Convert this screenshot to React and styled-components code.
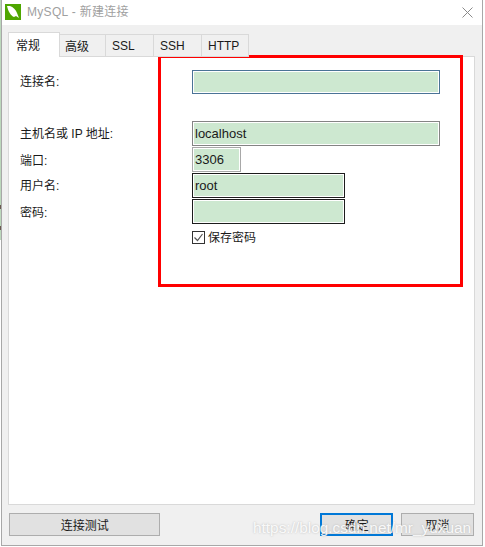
import React from 'react';
import styled, { createGlobalStyle } from 'styled-components';

const Global = createGlobalStyle`
  html, body { margin: 0; padding: 0; background: #fff; }
  body { font-family: "Liberation Sans", "Noto Sans CJK SC", sans-serif; font-size: 12px; color: #1a1a1a; }
`;

const Page = styled.div`
  position: relative;
  width: 485px;
  height: 547px;
  overflow: hidden;
  background: #fff;
`;

const Win = styled.div`
  box-sizing: border-box;
  width: 482px;
  height: 546px;
  margin-left: 1px;
  border-left: 1px solid #a8a8a8;
  border-right: 1px solid #a8a8a8;
  border-bottom: 1px solid #a8a8a8;
  display: flex;
  flex-direction: column;
`;

const TitleBar = styled.div`
  box-sizing: border-box;
  height: 25px;
  flex: none;
  display: flex;
  align-items: center;
  padding: 0 9px 1px 3px;
  background: #fff;
`;

const AppIcon = styled.svg`
  width: 16px;
  height: 16px;
  flex: none;
`;

const Title = styled.span`
  margin-left: 6px;
  font-size: 12px;
  letter-spacing: 0.3px;
  line-height: 14px;
  margin-top: -1px;
  color: #a0a0a0;
  flex: 1;
`;

const Body = styled.div`
  flex: 1;
  background: #f0f0f0;
  padding: 8px 7px 9px 6px;
  display: flex;
  flex-direction: column;
`;

const Tabs = styled.div`
  display: flex;
  height: 24px;
  align-items: flex-end;
  position: relative;
  z-index: 1;
  margin-bottom: -1px;
`;

const Tab = styled.div`
  box-sizing: border-box;
  width: ${p => p.$w}px;
  height: ${p => (p.$active ? 25 : 23)}px;
  margin-left: ${p => (p.$first ? 0 : -1)}px;
  padding: 0 0 ${p => (p.$active ? 2 : 0)}px ${p => p.$pad}px;
  display: flex;
  align-items: center;
  border: 1px solid #d9d9d9;
  border-bottom: ${p => (p.$active ? 'none' : '1px solid #d9d9d9')};
  background: ${p => (p.$active ? '#fff' : '#f0f0f0')};
  position: relative;
  z-index: ${p => (p.$active ? 2 : 1)};
  font-size: 12px;
`;

const Panel = styled.div`
  flex: 1;
  box-sizing: border-box;
  background: #fff;
  border: 1px solid #d9d9d9;
  padding: 12px 0 0 183px;
  position: relative;
`;

const Row = styled.div`
  position: relative;
  display: flex;
  margin-top: ${p => p.$gap || 1}px;
  height: ${p => p.$h || 25}px;
`;

const Label = styled.label`
  position: absolute;
  left: -172px;
  top: calc(50% - ${p => p.$up || 2}px);
  transform: translateY(-50%);
  white-space: nowrap;
  font-size: 12px;
`;

const Field = styled.div`
  box-sizing: border-box;
  width: ${p => p.$w}px;
  height: 100%;
  background: #cde8d0;
  border: 1px solid ${p => p.$border};
  box-shadow: inset 0 0 0 1px #fff;
  padding: 0 2px 1px;
  display: flex;
  align-items: center;
  font-size: 13px;
`;

const CheckRow = styled.div`
  display: flex;
  align-items: center;
  gap: 3px;
  margin-top: 5px;
  font-size: 12px;
  line-height: 14px;
`;

const CheckBox = styled.span`
  box-sizing: border-box;
  width: 13px;
  height: 13px;
  border: 1px solid #333;
  background: #fff;
  display: flex;
`;

const CheckText = styled.span`
  margin-top: 2px;
`;

const Footer = styled.div`
  height: 23px;
  margin-top: 8px;
  display: flex;
  padding-left: 1px;
  padding-right: 1px;
`;

const Btn = styled.div`
  box-sizing: border-box;
  width: ${p => p.$w}px;
  margin-left: ${p => p.$ml || 0}px;
  background: #e1e1e1;
  border: ${p => (p.$focus ? '2px solid #0078d7' : '1px solid #adadad')};
  display: flex;
  align-items: center;
  justify-content: center;
  font-size: 12px;
`;

const Watermark = styled.div`
  position: absolute;
  left: 253px;
  top: 518px;
  font-size: 15.4px;
  line-height: 20px;
  color: rgba(255, 255, 255, 0.9);
  text-shadow: 0 0 2px rgba(170, 170, 170, 0.8);
  white-space: nowrap;
`;

const RedBox = styled.div`
  position: absolute;
  left: 158px;
  top: 55px;
  width: 305px;
  height: 232px;
  box-sizing: border-box;
  border: 3px solid #ff0000;
  pointer-events: none;
`;

const LeftStrip = styled.div`
  position: absolute;
  left: 0;
  top: 0;
  width: 1px;
  height: 240px;
  background: #bcd8bc;
`;

const StripMark = styled.div`
  position: absolute;
  left: 0;
  top: ${p => p.$top}px;
  width: 1px;
  height: 4px;
  background: #6a5a50;
`;

export default function App() {
  return (
    <Page>
      <Global />
      <Win>
        <TitleBar>
          <AppIcon viewBox="0 0 16 16">
            <rect width="16" height="16" fill="#4ea600" />
            <path d="M2 2h3c3 1 6 4 7 7l2 5-3-2-2 1C6 12 3 7 2 2z" fill="#fff" />
          </AppIcon>
          <Title>MySQL - 新建连接</Title>
          <svg width="11" height="11" viewBox="0 0 11 11">
            <path d="M.5.5l10 10M10.5.5l-10 10" stroke="#8a8a8a" strokeWidth="1" fill="none" />
          </svg>
        </TitleBar>
        <Body>
          <Tabs>
            <Tab $first $active $w={52} $pad={7}>常规</Tab>
            <Tab $w={47} $pad={5}>高级</Tab>
            <Tab $w={49} $pad={6}>SSL</Tab>
            <Tab $w={49} $pad={6}>SSH</Tab>
            <Tab $w={48} $pad={6}>HTTP</Tab>
          </Tabs>
          <Panel>
            <Row $gap={1} $h={24}>
              <Label>连接名:</Label>
              <Field $w={248} $border="#4a7396" />
            </Row>
            <Row $gap={27} $h={25}>
              <Label>主机名或 IP 地址:</Label>
              <Field $w={248} $border="#848484">localhost</Field>
            </Row>
            <Row $gap={1} $h={25}>
              <Label $up={1}>端口:</Label>
              <Field $w={49} $border="#a8a8a8">3306</Field>
            </Row>
            <Row $gap={1} $h={25}>
              <Label>用户名:</Label>
              <Field $w={153} $border="#1c1c1c">root</Field>
            </Row>
            <Row $gap={1} $h={25}>
              <Label $up={1}>密码:</Label>
              <Field $w={153} $border="#1c1c1c" />
            </Row>
            <CheckRow>
              <CheckBox>
                <svg width="11" height="11" viewBox="0 0 11 11">
                  <path d="M1.5 5.5l3 3 5-6.5" stroke="#555" strokeWidth="1.2" fill="none" />
                </svg>
              </CheckBox>
              <CheckText>保存密码</CheckText>
            </CheckRow>
          </Panel>
          <Footer>
            <Btn $w={152}>连接测试</Btn>
            <Btn $w={73} $ml={160} $focus>确定</Btn>
            <Btn $w={73} $ml={8}>取消</Btn>
          </Footer>
        </Body>
      </Win>
      <LeftStrip />
      <StripMark $top={205} />
      <StripMark $top={226} />
      <RedBox />
      <Watermark>https://blog.csdn.net/mr_yuxuan</Watermark>
    </Page>
  );
}
